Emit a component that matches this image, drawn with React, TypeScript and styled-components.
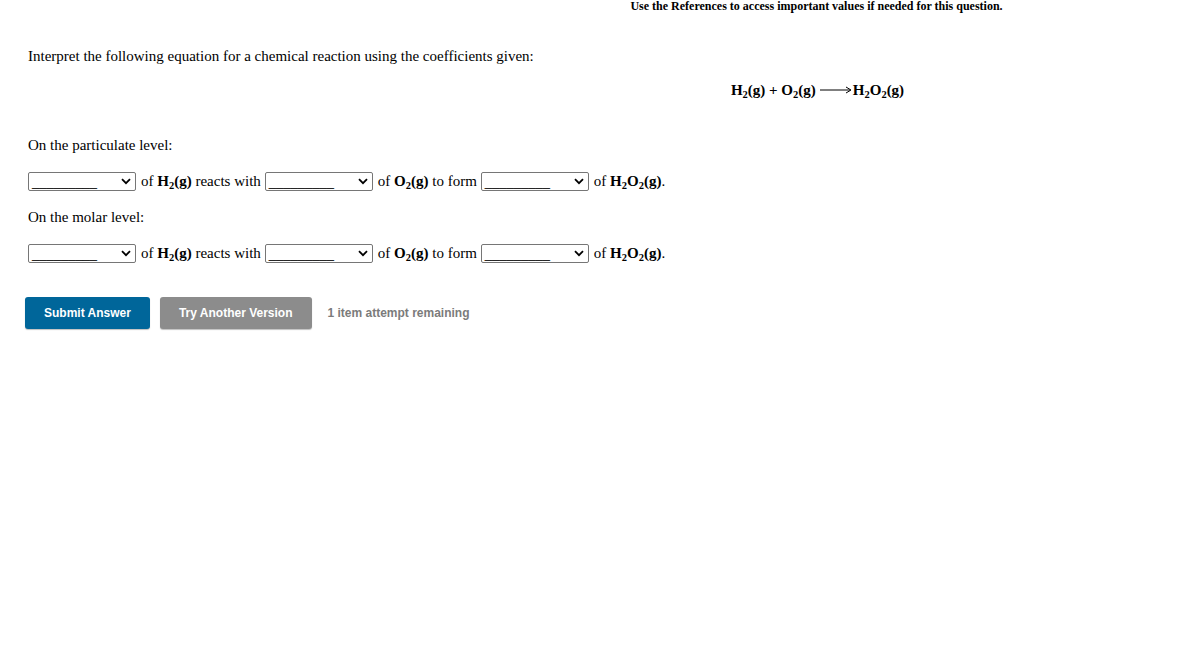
import styled, { createGlobalStyle } from "styled-components";

const Global = createGlobalStyle`
  body {
    margin: 0;
    background: #ffffff;
    font-family: "Liberation Serif", "Times New Roman", serif;
    color: #000;
  }
`;

const Page = styled.div`
  width: 1203px;
  min-height: 669px;
  display: flex;
  flex-direction: column;
`;

const RefNote = styled.div`
  padding-left: 430px;
  text-align: center;
  font-size: 12px;
  font-weight: bold;
  line-height: 12px;
  height: 12px;
`;

const Question = styled.section`
  padding: 0 28px;
  font-size: 15px;
`;

const Prompt = styled.p`
  margin: 36px 0 0;
  line-height: 17px;
`;

const Equation = styled.div`
  margin-top: 16px;
  padding-left: 432px;
  font-weight: bold;
  font-size: 15px;
  line-height: 18px;
  display: flex;
  justify-content: center;
  align-items: center;
  white-space: pre;
`;

const Arrow = styled.span`
  display: inline-flex;
  align-items: center;
  margin: 0 1px 0 4px;
`;

const Level = styled.p<{ $top: number }>`
  margin: ${(p) => p.$top}px 0 0;
  line-height: 17px;
`;

const Row = styled.div`
  margin-top: 18px;
  display: flex;
  align-items: center;
  line-height: 19px;
  white-space: nowrap;
`;

const Phrase = styled.span`
  margin: 0 4px 0 5px;
`;

const Select = styled.div`
  position: relative;
  width: 108px;
  height: 19px;
  box-sizing: border-box;
  border: 1px solid #767676;
  border-radius: 2px;
  background: #fff;
  font-family: "Liberation Sans", Arial, sans-serif;
  font-size: 13px;
  line-height: 17px;
  padding-left: 3px;
  color: #000;
  display: flex;
  align-items: center;
`;

const Chevron = styled.svg`
  position: absolute;
  right: 4px;
  top: 5px;
`;

const Sub = styled.sub`
  font-size: 10.5px;
  vertical-align: -3px;
  line-height: 0;
`;

const Actions = styled.div`
  margin-top: 34px;
  padding-left: 25px;
  display: flex;
  align-items: center;
  gap: 10px;
  font-family: "Liberation Sans", Arial, sans-serif;
`;

const Button = styled.button<{ $bg: string }>`
  height: 32px;
  padding: 0 19px;
  border: none;
  border-radius: 3px;
  background: ${(p) => p.$bg};
  color: #fff;
  font-family: "Liberation Sans", Arial, sans-serif;
  font-weight: bold;
  font-size: 12px;
  box-shadow: 0 1px 1px rgba(0, 0, 0, 0.25);
`;

const Remaining = styled.span`
  margin-left: 6px;
  color: #7b7b7b;
  font-weight: bold;
  font-size: 12px;
`;

function Dropdown() {
  return (
    <Select>
      _________
      <Chevron width="10" height="7" viewBox="0 0 10 7">
        <path d="M1 1.2 L5 5.2 L9 1.2" fill="none" stroke="#000" strokeWidth="1.8" />
      </Chevron>
    </Select>
  );
}

function Formula({ parts }: { parts: [string, string?][] }) {
  return (
    <b>
      {parts.map(([el, n], i) => (
        <span key={i}>
          {el}
          {n && <Sub>{n}</Sub>}
        </span>
      ))}
      (g)
    </b>
  );
}

function AnswerRow() {
  return (
    <Row>
      <Dropdown />
      <Phrase>
        of <Formula parts={[["H", "2"]]} /> reacts with
      </Phrase>
      <Dropdown />
      <Phrase>
        of <Formula parts={[["O", "2"]]} /> to form
      </Phrase>
      <Dropdown />
      <Phrase>
        of <Formula parts={[["H", "2"], ["O", "2"]]} />.
      </Phrase>
    </Row>
  );
}

export default function App() {
  return (
    <Page>
      <Global />
      <RefNote>Use the References to access important values if needed for this question.</RefNote>
      <Question>
        <Prompt>Interpret the following equation for a chemical reaction using the coefficients given:</Prompt>
        <Equation>
          <Formula parts={[["H", "2"]]} />
          <span> + </span>
          <Formula parts={[["O", "2"]]} />
          <Arrow>
            <svg width="32" height="8" viewBox="0 0 32 8">
              <path d="M0 4 H30 M26 1 L31 4 L26 7" fill="none" stroke="#000" strokeWidth="1" />
            </svg>
          </Arrow>
          <Formula parts={[["H", "2"], ["O", "2"]]} />
        </Equation>
        <Level $top={38}>On the particulate level:</Level>
        <AnswerRow />
        <Level $top={18}>On the molar level:</Level>
        <AnswerRow />
      </Question>
      <Actions>
        <Button $bg="#00669a">Submit Answer</Button>
        <Button $bg="#8c8c8c">Try Another Version</Button>
        <Remaining>1 item attempt remaining</Remaining>
      </Actions>
    </Page>
  );
}
